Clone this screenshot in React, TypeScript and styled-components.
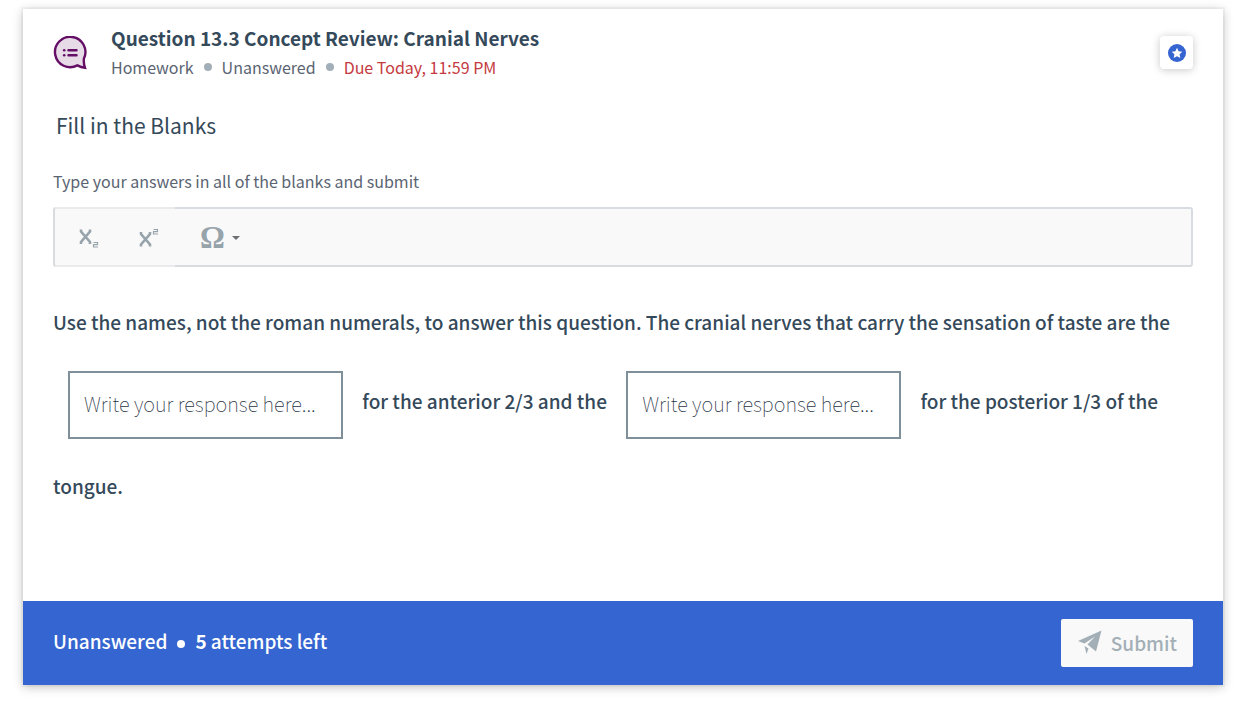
import React from "react";
import styled, { createGlobalStyle } from "styled-components";

const GlobalStyle = createGlobalStyle`
  *, *::before, *::after { box-sizing: border-box; }
  body {
    margin: 0;
    background: #fff;
    color: #34495a;
    font-family: "Source Sans Pro", "Noto Sans CJK SC", "Noto Sans", sans-serif;
  }
  h1, h2, p { margin: 0; font-weight: inherit; }
  button, input { font: inherit; color: inherit; }
`;

const Card = styled.article`
  margin: 9px 29px 21px 23px;
  background: #fff;
  box-shadow: 0 0 0 2px rgba(0, 0, 0, 0.03), 0 2px 10px rgba(0, 0, 0, 0.24);
`;

const Header = styled.header`
  display: flex;
  align-items: flex-start;
  padding: 14px 30px 0;
`;

const QuestionIcon = styled.svg`
  flex: none;
  width: 34px;
  height: 34px;
  margin: 13px 24px 0 0;
`;

const Heading = styled.div`
  flex: 1;
`;

const Title = styled.h1`
  font-size: 19px;
  line-height: 30px;
  font-weight: 600;
`;

const Meta = styled.div`
  display: flex;
  align-items: center;
  font-size: 16px;
  line-height: 28px;
  color: #5a6472;
`;

const Dot = styled.span<{ $color: string; $gap: number }>`
  width: 8px;
  height: 8px;
  margin: 0 ${(p) => p.$gap}px;
  border-radius: 50%;
  background: ${(p) => p.$color};
`;

const Due = styled.span`
  color: #c43a3e;
`;

const StarButton = styled.button`
  display: flex;
  align-items: center;
  justify-content: center;
  width: 33px;
  height: 33px;
  margin-top: 13px;
  padding: 0;
  border: 0;
  border-radius: 4px;
  background: #fff;
  box-shadow: 0 1px 8px rgba(0, 0, 0, 0.22);
`;

const Content = styled.div`
  padding: 26px 30px 83px;
`;

const Kind = styled.h2`
  padding-left: 3px;
  font-size: 21px;
  line-height: 36px;
`;

const Hint = styled.p`
  margin-top: 26px;
  font-size: 16px;
  line-height: 24px;
  color: #5a6472;
`;

const Toolbar = styled.div`
  display: flex;
  height: 60px;
  margin-top: 14px;
  border: 2px solid #d8dce0;
  border-radius: 3px;
  background: #f9f9f9;
`;

const ScriptTools = styled.div`
  display: flex;
  width: 120px;
  margin: -2px 0;
  border: solid #e8eaeb;
  border-width: 2px 0;
`;

const Tool = styled.button`
  display: flex;
  align-items: center;
  justify-content: center;
  min-width: 60px;
  padding: 2px 0 0 8px;
  border: 0;
  background: transparent;
  color: #97a3ab;
`;

const SymbolTool = styled(Tool)`
  justify-content: flex-start;
  gap: 7px;
  margin-left: 17px;
`;

const Omega = styled.span`
  font: bold 31px/32px "Liberation Serif", serif;
`;

const Prompt = styled.p`
  margin-top: 23px;
  font-size: 19px;
  line-height: 64px;
  font-weight: 500;
`;

const Blank = styled.input`
  width: 275px;
  height: 68px;
  margin: 17px 15px 15px;
  padding: 0 14px 4px;
  border: 2px solid #80909b;
  border-radius: 0;
  background: #fff;
  font-size: 20px;
  font-weight: 100;
  vertical-align: middle;
  &::placeholder { color: #1f3344; opacity: 1; }
`;

const Footer = styled.footer`
  display: flex;
  align-items: center;
  justify-content: space-between;
  padding: 18px 30px;
  background: #3465d0;
  color: #fff;
`;

const Status = styled.div`
  display: flex;
  align-items: center;
  padding-bottom: 4px;
  font-size: 19px;
  line-height: 32px;
  font-weight: 500;
  ${Dot} { margin-top: 6px; }
`;

const Submit = styled.button`
  display: flex;
  align-items: center;
  gap: 9px;
  height: 48px;
  padding: 0 16px 2px 17px;
  border: 0;
  border-radius: 2px;
  background: #f9f9f9;
  color: #a3afb7;
  font-size: 19px;
  font-weight: 500;
`;

export default function App() {
  return (
    <>
      <GlobalStyle />
      <Card>
        <Header>
          <QuestionIcon viewBox="0 0 34 34" aria-hidden="true">
            <path
              d="M30.9 22.6A15.2 15.2 0 1 0 24.4 29.4Q28 31.4 32 31.8Q30.4 27.5 30.9 22.6Z"
              fill="#e8dbe8"
              stroke="#640e66"
              strokeWidth="2.4"
            />
            <path d="M15.5 14.2h8M15.5 19.2h8" stroke="#640e66" strokeWidth="2.5" strokeLinecap="round" />
            <circle cx="11.2" cy="14.2" r="1.3" fill="#640e66" />
            <circle cx="11.2" cy="19.2" r="1.3" fill="#640e66" />
          </QuestionIcon>
          <Heading>
            <Title>Question 13.3 Concept Review: Cranial Nerves</Title>
            <Meta>
              <span>Homework</span>
              <Dot $color="#a3afb8" $gap={10} />
              <span>Unanswered</span>
              <Dot $color="#a3afb8" $gap={10} />
              <Due>Due Today, 11:59 PM</Due>
            </Meta>
          </Heading>
          <StarButton type="button" aria-label="Bookmark question">
            <svg width="18" height="18" viewBox="0 0 18 18" aria-hidden="true">
              <circle cx="9" cy="9" r="9" fill="#3465d0" />
              <path d="M9 3.8l1.6 3.4 3.7.5-2.7 2.6.7 3.7L9 12.2 5.7 14l.7-3.7-2.7-2.6 3.7-.5z" fill="#fff" />
            </svg>
          </StarButton>
        </Header>

        <Content>
          <Kind>Fill in the Blanks</Kind>
          <Hint>Type your answers in all of the blanks and submit</Hint>
          <Toolbar role="toolbar" aria-label="Formatting">
            <ScriptTools>
              <Tool type="button" aria-label="Subscript">
                <svg width="20" height="22" viewBox="0 0 20 22" fill="none" stroke="currentColor" aria-hidden="true">
                  <path d="M2 2.5v2l9 10.5v2M11 2.5v2L2 15v2" strokeWidth="2.6" />
                  <path d="M14.5 15.5h4v2.2h-4v2.3h4.5" strokeWidth="1.2" />
                </svg>
              </Tool>
              <Tool type="button" aria-label="Superscript">
                <svg width="20" height="22" viewBox="0 0 20 22" fill="none" stroke="currentColor" aria-hidden="true">
                  <path d="M2 5v2l9 10.5v2M11 5v2L2 17.5v2" strokeWidth="2.6" />
                  <path d="M14.5 2.5h4v2.2h-4v2.3h4.5" strokeWidth="1.2" />
                </svg>
              </Tool>
            </ScriptTools>
            <SymbolTool type="button" aria-label="Special characters" aria-haspopup="menu">
              <Omega>Ω</Omega>
              <svg width="8" height="4" viewBox="0 0 8 4" aria-hidden="true">
                <path d="M0 0h8L4 4z" fill="#6d7073" />
              </svg>
            </SymbolTool>
          </Toolbar>
          <Prompt>
            Use the names, not the roman numerals, to answer this question. The cranial nerves that carry the
            sensation of taste are the{" "}
            <Blank aria-label="First blank" placeholder="Write your response here..." /> for the anterior 2/3 and
            the <Blank aria-label="Second blank" placeholder="Write your response here..." /> for the posterior 1/3
            of the tongue.
          </Prompt>
        </Content>

        <Footer>
          <Status>
            <span>Unanswered</span>
            <Dot $color="#fff" $gap={10} />
            <span>
              <b>5</b> attempts left
            </span>
          </Status>
          <Submit type="button">
            <svg width="24" height="24" viewBox="0 0 24 24" fill="currentColor" aria-hidden="true">
              <path d="M23.5.5L0 11l6.5 2.5L17 6.5l-7.5 8 8.500 7z" />
              <path d="M6.5 16l4 2.5-2 5.5z" />
            </svg>
            Submit
          </Submit>
        </Footer>
      </Card>
    </>
  );
}
